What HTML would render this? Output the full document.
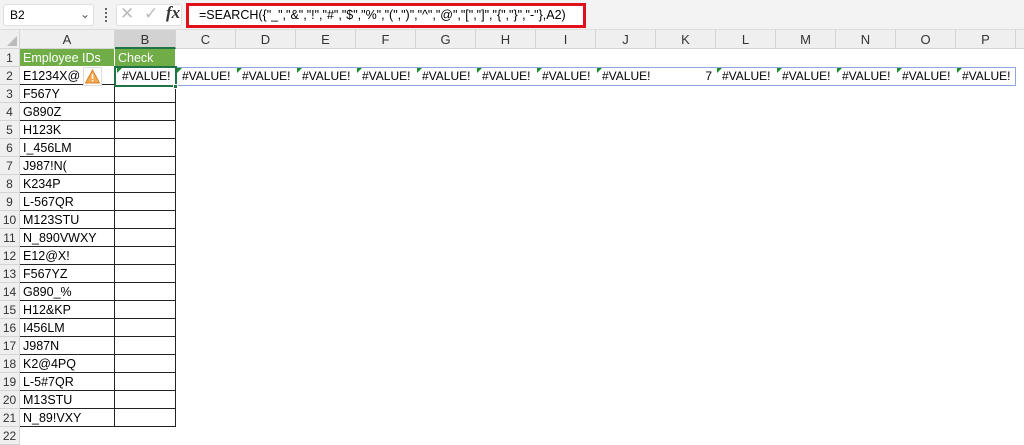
<!DOCTYPE html><html><head><style>
body{margin:0;width:1024px;height:440px;background:#fff;position:relative;overflow:hidden;font-family:"Liberation Sans",sans-serif;font-size:12.5px;color:#000}
div{position:absolute;box-sizing:border-box}
.top{left:0;top:0;width:1024px;height:30px;background:#f3f3f3}
.hdr{top:30px;height:19px;background:#efefef;border-right:1px solid #d4d4d4;border-bottom:1px solid #d4d4d4;text-align:center;line-height:19px;color:#333;font-size:13px}
.rh{left:0;width:20px;height:18px;background:#efefef;border-bottom:1px solid #d4d4d4;border-right:1px solid #d4d4d4;text-align:center;line-height:18px;font-size:12px;color:#333}
.c{height:18px;line-height:18px;padding-left:3px;white-space:nowrap}
.bd{border-right:1px solid #222;border-bottom:1px solid #222}
.v{top:67px;height:18px;line-height:18px;padding-left:6px;font-size:12px}
.tri{width:0;height:0;border-top:5px solid #1a8a2e;border-right:5px solid transparent;top:68px}
</style></head><body>
<div class="top"></div>
<div style="left:3px;top:4px;width:91px;height:22px;background:#fff;border:1px solid #e0e0e0;border-radius:3px;padding:3px 6px;font-size:12px">B2<span style="position:absolute;left:76px;top:2px;color:#555">&#8964;</span></div>
<div style="left:105px;top:8px;width:2px;height:14px;border-left:2px dotted #666"></div>
<div style="left:116px;top:4px;width:66px;height:22px;background:#fff;border:1px solid #e0e0e0;border-radius:3px"></div>
<div style="left:120px;top:4px;color:#bbb;font-size:17px">&#10005;</div>
<div style="left:144px;top:4px;color:#bbb;font-size:17px">&#10003;</div>
<div style="left:166px;top:3px;font-family:'Liberation Serif',serif;font-style:italic;font-size:17px;font-weight:bold;color:#333">fx</div>
<div style="left:186px;top:3px;width:400px;height:25px;border:3px solid #e0101c;background:#fff;padding:2px 0 0 10px;font-size:12.5px;white-space:nowrap">=SEARCH({"_","&amp;","!","#","$","%","(",")","^","@","[","]","{","}","-"},A2)</div>
<div style="left:0;top:29px;width:1024px;height:1px;background:#ddd"></div>
<div class="hdr" style="left:0;width:20px"><span style="position:absolute;right:2px;bottom:2px;width:0;height:0;border-bottom:10px solid #bbb;border-left:10px solid transparent"></span></div>
<div class="hdr" style="left:20px;width:95px">A</div>
<div class="hdr" style="left:115px;width:61px;background:#d2d2d2;border-bottom:2px solid #217346">B</div>
<div class="hdr" style="left:176px;width:60px">C</div><div class="hdr" style="left:236px;width:60px">D</div><div class="hdr" style="left:296px;width:60px">E</div><div class="hdr" style="left:356px;width:60px">F</div><div class="hdr" style="left:416px;width:60px">G</div><div class="hdr" style="left:476px;width:60px">H</div><div class="hdr" style="left:536px;width:60px">I</div><div class="hdr" style="left:596px;width:60px">J</div><div class="hdr" style="left:656px;width:60px">K</div><div class="hdr" style="left:716px;width:60px">L</div><div class="hdr" style="left:776px;width:60px">M</div><div class="hdr" style="left:836px;width:60px">N</div><div class="hdr" style="left:896px;width:60px">O</div><div class="hdr" style="left:956px;width:60px">P</div><div class="hdr" style="left:1016px;width:20px"></div>
<div class="rh" style="top:49px">1</div><div class="rh" style="top:67px">2</div><div class="rh" style="top:85px">3</div><div class="rh" style="top:103px">4</div><div class="rh" style="top:121px">5</div><div class="rh" style="top:139px">6</div><div class="rh" style="top:157px">7</div><div class="rh" style="top:175px">8</div><div class="rh" style="top:193px">9</div><div class="rh" style="top:211px">10</div><div class="rh" style="top:229px">11</div><div class="rh" style="top:247px">12</div><div class="rh" style="top:265px">13</div><div class="rh" style="top:283px">14</div><div class="rh" style="top:301px">15</div><div class="rh" style="top:319px">16</div><div class="rh" style="top:337px">17</div><div class="rh" style="top:355px">18</div><div class="rh" style="top:373px">19</div><div class="rh" style="top:391px">20</div><div class="rh" style="top:409px">21</div><div class="rh" style="top:427px">22</div>
<div class="c bd" style="left:20px;top:49px;width:95px;background:#70ad47;color:#fff;border-color:#fff">Employee IDs</div>
<div class="c bd" style="left:115px;top:49px;width:61px;background:#70ad47;color:#fff;border-color:#fff">Check</div>
<div class="c bd" style="left:20px;top:67px;width:95px">E1234X@</div>
<div style="left:83px;top:67px;width:19px;height:19px;background:#fff;border:1px solid #ddd"><svg width="17" height="17" viewBox="0 0 17 17"><path d="M8.5 2 L15.5 15 H1.5 Z" fill="#f4a74b" stroke="#d9822b"/><rect x="7.8" y="6" width="1.5" height="5" fill="#fff"/><rect x="7.8" y="12" width="1.5" height="1.5" fill="#fff"/></svg></div>
<div class="c bd" style="left:20px;top:85px;width:95px">F567Y</div><div class="c bd" style="left:115px;top:85px;width:61px"></div>
<div class="c bd" style="left:20px;top:103px;width:95px">G890Z</div><div class="c bd" style="left:115px;top:103px;width:61px"></div>
<div class="c bd" style="left:20px;top:121px;width:95px">H123K</div><div class="c bd" style="left:115px;top:121px;width:61px"></div>
<div class="c bd" style="left:20px;top:139px;width:95px">I_456LM</div><div class="c bd" style="left:115px;top:139px;width:61px"></div>
<div class="c bd" style="left:20px;top:157px;width:95px">J987!N(</div><div class="c bd" style="left:115px;top:157px;width:61px"></div>
<div class="c bd" style="left:20px;top:175px;width:95px">K234P</div><div class="c bd" style="left:115px;top:175px;width:61px"></div>
<div class="c bd" style="left:20px;top:193px;width:95px">L-567QR</div><div class="c bd" style="left:115px;top:193px;width:61px"></div>
<div class="c bd" style="left:20px;top:211px;width:95px">M123STU</div><div class="c bd" style="left:115px;top:211px;width:61px"></div>
<div class="c bd" style="left:20px;top:229px;width:95px">N_890VWXY</div><div class="c bd" style="left:115px;top:229px;width:61px"></div>
<div class="c bd" style="left:20px;top:247px;width:95px">E12@X!</div><div class="c bd" style="left:115px;top:247px;width:61px"></div>
<div class="c bd" style="left:20px;top:265px;width:95px">F567YZ</div><div class="c bd" style="left:115px;top:265px;width:61px"></div>
<div class="c bd" style="left:20px;top:283px;width:95px">G890_%</div><div class="c bd" style="left:115px;top:283px;width:61px"></div>
<div class="c bd" style="left:20px;top:301px;width:95px">H12&amp;KP</div><div class="c bd" style="left:115px;top:301px;width:61px"></div>
<div class="c bd" style="left:20px;top:319px;width:95px">I456LM</div><div class="c bd" style="left:115px;top:319px;width:61px"></div>
<div class="c bd" style="left:20px;top:337px;width:95px">J987N</div><div class="c bd" style="left:115px;top:337px;width:61px"></div>
<div class="c bd" style="left:20px;top:355px;width:95px">K2@4PQ</div><div class="c bd" style="left:115px;top:355px;width:61px"></div>
<div class="c bd" style="left:20px;top:373px;width:95px">L-5#7QR</div><div class="c bd" style="left:115px;top:373px;width:61px"></div>
<div class="c bd" style="left:20px;top:391px;width:95px">M13STU</div><div class="c bd" style="left:115px;top:391px;width:61px"></div>
<div class="c bd" style="left:20px;top:409px;width:95px">N_89!VXY</div><div class="c bd" style="left:115px;top:409px;width:61px"></div>
<div style="left:176px;top:67px;width:840px;height:19px;border:1px solid #8eaadb"></div>
<div class="v" style="left:116px">#VALUE!</div>
<div class="v" style="left:176px">#VALUE!</div><div class="v" style="left:236px">#VALUE!</div><div class="v" style="left:296px">#VALUE!</div><div class="v" style="left:356px">#VALUE!</div><div class="v" style="left:416px">#VALUE!</div><div class="v" style="left:476px">#VALUE!</div><div class="v" style="left:536px">#VALUE!</div><div class="v" style="left:596px">#VALUE!</div>
<div class="v" style="left:656px;width:60px;text-align:right;padding-right:4px">7</div>
<div class="v" style="left:716px">#VALUE!</div><div class="v" style="left:776px">#VALUE!</div><div class="v" style="left:836px">#VALUE!</div><div class="v" style="left:896px">#VALUE!</div><div class="v" style="left:956px">#VALUE!</div>
<div class="tri" style="left:117px"></div><div class="tri" style="left:177px"></div><div class="tri" style="left:237px"></div><div class="tri" style="left:297px"></div><div class="tri" style="left:357px"></div><div class="tri" style="left:417px"></div><div class="tri" style="left:477px"></div><div class="tri" style="left:537px"></div><div class="tri" style="left:597px"></div><div class="tri" style="left:717px"></div><div class="tri" style="left:777px"></div><div class="tri" style="left:837px"></div><div class="tri" style="left:897px"></div><div class="tri" style="left:957px"></div>
<div style="left:114px;top:66px;width:63px;height:21px;border:2px solid #217346"></div>
<div style="left:173px;top:84px;width:5px;height:5px;background:#217346;border:1px solid #fff"></div>
</body></html>
